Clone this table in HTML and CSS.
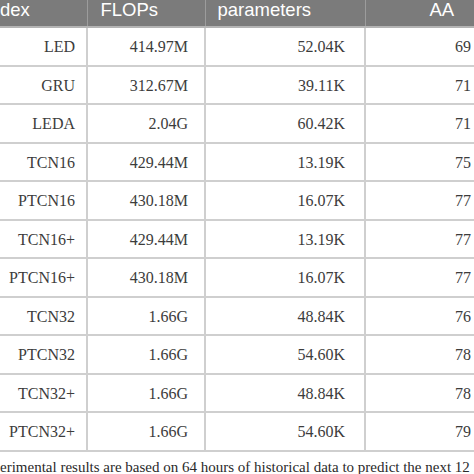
FILE: index.html
```html
<!DOCTYPE html>
<html>
<head>
<meta charset="utf-8">
<link rel="stylesheet" href="styles.css">
</head>
<body>
<div class="page">
<table class="data">
<colgroup>
<col class="c1"><col class="c2"><col class="c3"><col class="c4">
</colgroup>
<thead>
<tr><th class="h1">dex</th><th class="h2">FLOPs</th><th class="h3">parameters</th><th class="h4">AA</th></tr>
</thead>
<tbody>
<tr><td class="d1">LED</td><td class="d2">414.97M</td><td class="d3">52.04K</td><td class="d4">69</td></tr>
<tr><td class="d1">GRU</td><td class="d2">312.67M</td><td class="d3">39.11K</td><td class="d4">71</td></tr>
<tr><td class="d1">LEDA</td><td class="d2">2.04G</td><td class="d3">60.42K</td><td class="d4">71</td></tr>
<tr><td class="d1">TCN16</td><td class="d2">429.44M</td><td class="d3">13.19K</td><td class="d4">75</td></tr>
<tr><td class="d1">PTCN16</td><td class="d2">430.18M</td><td class="d3">16.07K</td><td class="d4">77</td></tr>
<tr><td class="d1">TCN16+</td><td class="d2">429.44M</td><td class="d3">13.19K</td><td class="d4">77</td></tr>
<tr><td class="d1">PTCN16+</td><td class="d2">430.18M</td><td class="d3">16.07K</td><td class="d4">77</td></tr>
<tr><td class="d1">TCN32</td><td class="d2">1.66G</td><td class="d3">48.84K</td><td class="d4">76</td></tr>
<tr><td class="d1">PTCN32</td><td class="d2">1.66G</td><td class="d3">54.60K</td><td class="d4">78</td></tr>
<tr><td class="d1">TCN32+</td><td class="d2">1.66G</td><td class="d3">48.84K</td><td class="d4">78</td></tr>
<tr><td class="d1">PTCN32+</td><td class="d2">1.66G</td><td class="d3">54.60K</td><td class="d4">79</td></tr>
</tbody>
</table>
<p class="caption">erimental results are based on 64 hours of historical data to predict the next 12</p>
</div>
</body>
</html>
```
FILE: styles.css
```css
html, body {
  margin: 0;
  padding: 0;
  background: #ffffff;
}
.page {
  width: 474px;
  height: 474px;
  overflow: hidden;
}
.data {
  border-collapse: collapse;
  table-layout: fixed;
  width: 474px;
}
.c1 { width: 87px; }
.c2 { width: 118px; }
.c3 { width: 160px; }
.c4 { width: 109px; }
.data th {
  background: #7b7b7b;
  color: #ffffff;
  font-family: "Liberation Sans", Arial, sans-serif;
  font-weight: normal;
  font-size: 18.5px;
  line-height: 20px;
  height: 26px;
  padding: 0 0 6px 0;
  text-align: left;
  vertical-align: top;
  border-left: 1px solid #9c9c9c;
  border-bottom: 2px solid #b4b4b4;
  white-space: nowrap;
  box-sizing: border-box;
}
.data th.h1 { border-left: none; padding-left: 0; }
.data th.h2 { padding-left: 13px; }
.data th.h3 { padding-left: 12px; }
.data th.h4 { padding-left: 64px; }
.data td {
  font-family: "Liberation Serif", "Times New Roman", serif;
  font-size: 16px;
  color: #3c3c3c;
  text-align: right;
  height: 38.5px;
  padding: 2px 0 0 0;
  box-sizing: border-box;
  vertical-align: middle;
  border-left: 2px solid #cfcfcf;
  border-bottom: 2px solid #cfcfcf;
  white-space: nowrap;
}
.data td.d1 { border-left: none; padding-right: 11px; }
.data td.d2 { padding-right: 16px; }
.data td.d3 { padding-right: 19px; }
.data td.d4 { padding-right: 3px; }
.caption {
  margin: 5px 0 0 0;
  font-family: "Liberation Serif", "Times New Roman", serif;
  font-size: 15px;
  line-height: 20px;
  color: #2a2a2a;
  white-space: nowrap;
}
```
